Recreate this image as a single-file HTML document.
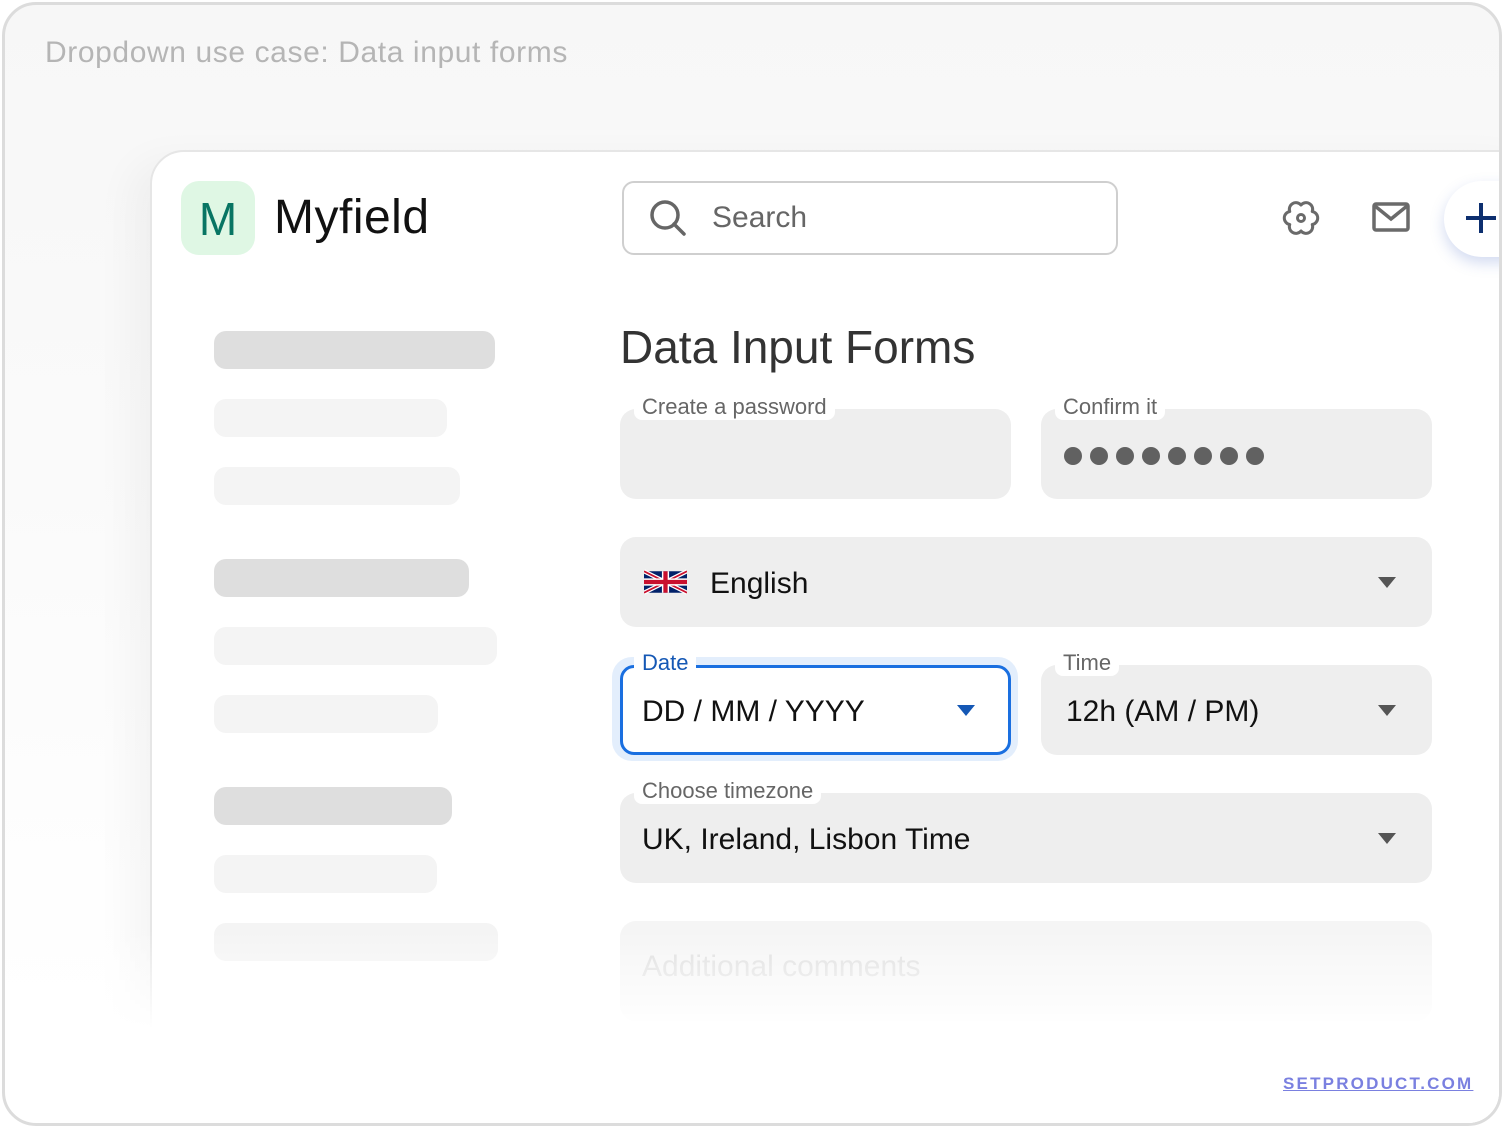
<!DOCTYPE html>
<html><head><meta charset="utf-8"><style>
*{margin:0;padding:0;box-sizing:border-box}
body{width:1504px;height:1128px;background:#fff;font-family:"Liberation Sans",sans-serif;position:relative;overflow:hidden}
.frame{position:absolute;left:2px;top:2px;width:1500px;height:1124px;border:3px solid #dcdcdc;border-radius:34px;background:linear-gradient(#f7f7f7,#fafafa 40%,#fff 90%)}
.clip{position:absolute;left:5px;top:5px;width:1494px;height:1118px;border-radius:31px;overflow:hidden}
.in{position:absolute;left:-5px;top:-5px;width:1504px;height:1128px}
.t{position:absolute}
.card{position:absolute;left:150px;top:150px;width:1400px;height:1000px;background:#fff;border:2px solid #e6e6e6;border-radius:34px;box-shadow:-20px 10px 40px rgba(0,0,0,0.04)}
.fade{position:absolute;left:60px;top:930px;width:1460px;height:220px;background:linear-gradient(rgba(255,255,255,0),#fff 45%)}
.bar{position:absolute;left:214px;height:38px;border-radius:12px;background:#f4f4f4}
.bar.d{background:#dedede}
.fld{position:absolute;background:#eeeeee;border-radius:16px}
.lbl{position:absolute;background:#fff;border-radius:0 0 8px 8px;padding:0 8px;font-size:22px;color:#666;line-height:26px}
.val{position:absolute;font-size:30px;color:#111}
.tri{position:absolute;width:0;height:0;border-left:9px solid transparent;border-right:9px solid transparent;border-top:11px solid #555}
.dot{position:absolute;top:447px;width:18px;height:18px;border-radius:50%;background:#616161}
</style></head><body>
<div class="frame"></div>
<div class="clip"><div class="in">
<div class="t" style="left:45px;top:36px;font-size:30px;color:#b5b5b5;letter-spacing:.6px">Dropdown use case: Data input forms</div>
<div class="card"></div>
<div class="t" style="left:181px;top:181px;width:74px;height:74px;border-radius:18px;background:#dff7e4;color:#087563;font-size:46px;text-align:center;line-height:76px">M</div>
<div class="t" style="left:274px;top:190px;font-size:48px;color:#111;letter-spacing:.5px">Myfield</div>
<div class="t" style="left:622px;top:181px;width:496px;height:74px;border:2px solid #cfcfcf;border-radius:12px;background:#fff"></div>
<svg class="t" style="left:647px;top:197px" width="42" height="42" viewBox="0 0 42 42"><circle cx="18" cy="18" r="13" fill="none" stroke="#666" stroke-width="3.5"/><path d="M27 27l10 10" stroke="#666" stroke-width="3.5" stroke-linecap="round"/></svg>
<div class="t" style="left:712px;top:201px;font-size:30px;color:#666">Search</div>
<svg class="t" style="left:1280px;top:197px" width="42" height="42" viewBox="0 0 42 42"><path d="M32.26 27.5A6.6 6.6 0 0 1 21 34A6.6 6.6 0 0 1 9.74 27.5A6.6 6.6 0 0 1 9.74 14.5A6.6 6.6 0 0 1 21 8A6.6 6.6 0 0 1 32.26 14.5A6.6 6.6 0 0 1 32.26 27.5Z" fill="none" stroke="#6a6a6a" stroke-width="3" stroke-linejoin="round"/><circle cx="21" cy="21" r="3.5" fill="none" stroke="#6a6a6a" stroke-width="3"/></svg>
<svg class="t" style="left:1372px;top:202px" width="38" height="32" viewBox="0 0 38 32"><rect x="2" y="2" width="34" height="26" rx="2" fill="none" stroke="#6a6a6a" stroke-width="3.5"/><path d="M3 4l16 13 16-13" fill="none" stroke="#6a6a6a" stroke-width="3.5"/></svg>
<div class="t" style="left:1444px;top:181px;width:100px;height:76px;border-radius:38px;background:#fff;box-shadow:0 6px 14px rgba(80,110,200,0.25)"></div>
<svg class="t" style="left:1463px;top:200px" width="36" height="36" viewBox="0 0 36 36"><path d="M18 3v30M3 18h30" stroke="#0d2f6f" stroke-width="4"/></svg>

<div class="bar d" style="top:331px;width:281px"></div>
<div class="bar" style="top:399px;width:233px"></div>
<div class="bar" style="top:467px;width:246px"></div>
<div class="bar d" style="top:559px;width:255px"></div>
<div class="bar" style="top:627px;width:283px"></div>
<div class="bar" style="top:695px;width:224px"></div>
<div class="bar d" style="top:787px;width:238px"></div>
<div class="bar" style="top:855px;width:223px"></div>
<div class="bar" style="top:923px;width:284px"></div>

<div class="t" style="left:620px;top:320px;font-size:46px;color:#333">Data Input Forms</div>

<div class="fld" style="left:620px;top:409px;width:391px;height:90px"></div>
<div class="lbl" style="left:634px;top:394px">Create a password</div>
<div class="fld" style="left:1041px;top:409px;width:391px;height:90px"></div>
<div class="lbl" style="left:1055px;top:394px">Confirm it</div>
<div class="dot" style="left:1064px"></div><div class="dot" style="left:1090px"></div><div class="dot" style="left:1116px"></div><div class="dot" style="left:1142px"></div><div class="dot" style="left:1168px"></div><div class="dot" style="left:1194px"></div><div class="dot" style="left:1220px"></div><div class="dot" style="left:1246px"></div>

<div class="fld" style="left:620px;top:537px;width:812px;height:90px"></div>
<svg class="t" style="left:644px;top:567px" width="43" height="30" viewBox="0 0 60 30"><rect width="60" height="30" fill="#012169"/><path d="M0 0L60 30M60 0L0 30" stroke="#fff" stroke-width="6"/><path d="M0 0L60 30M60 0L0 30" stroke="#C8102E" stroke-width="2.5"/><path d="M30 0v30M0 15h60" stroke="#fff" stroke-width="10"/><path d="M30 0v30M0 15h60" stroke="#C8102E" stroke-width="6"/></svg>
<div class="val" style="left:710px;top:567px">English</div>
<div class="tri" style="left:1378px;top:577px"></div>

<div class="t" style="left:612px;top:657px;width:406px;height:104px;border-radius:20px;background:#e3eefc"></div>
<div class="t" style="left:620px;top:665px;width:391px;height:90px;border:3px solid #1a6fe0;border-radius:14px;background:#fff"></div>
<div class="lbl" style="left:634px;top:650px;color:#1558b5;background:#fff">Date</div>
<div class="val" style="left:642px;top:695px">DD / MM / YYYY</div>
<div class="tri" style="left:957px;top:705px;border-top-color:#1558b5"></div>

<div class="fld" style="left:1041px;top:665px;width:391px;height:90px"></div>
<div class="lbl" style="left:1055px;top:650px">Time</div>
<div class="val" style="left:1066px;top:695px">12h (AM / PM)</div>
<div class="tri" style="left:1378px;top:705px"></div>

<div class="fld" style="left:620px;top:793px;width:812px;height:90px"></div>
<div class="lbl" style="left:634px;top:778px">Choose timezone</div>
<div class="val" style="left:642px;top:823px">UK, Ireland, Lisbon Time</div>
<div class="tri" style="left:1378px;top:833px"></div>

<div class="fld" style="left:620px;top:921px;width:812px;height:100px;background:#f5f5f5"></div>
<div class="t" style="left:642px;top:950px;font-size:30px;color:#ddd">Additional comments</div>
<div class="fade"></div>

<div class="t" style="left:1283px;top:1074px;font-size:17px;color:#7a80e0;letter-spacing:2.2px;font-weight:bold;text-decoration:underline">SETPRODUCT.COM</div>
</div></div>
</body></html>
